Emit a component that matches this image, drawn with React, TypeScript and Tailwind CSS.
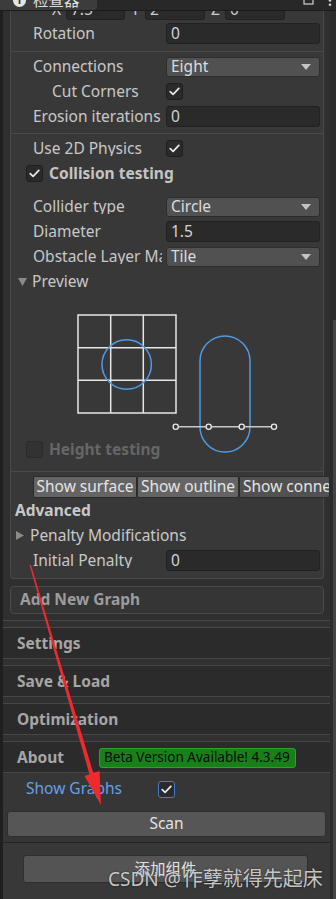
import React from "react";

const Check = ({ color = "#e8e8e8" }: { color?: string }) => (
  <svg width="11" height="9" viewBox="0 0 11 9" fill="none">
    <path d="M1.2 4.6 L4.1 7.4 L9.8 1.4" stroke={color} strokeWidth="1.7" strokeLinecap="round" strokeLinejoin="round" />
  </svg>
);

function Checkbox({ on = true, disabled = false, blue = false }: { on?: boolean; disabled?: boolean; blue?: boolean }) {
  return (
    <div
      className={`w-[17px] h-[17px] shrink-0 rounded-[3px] border flex items-center justify-center ${
        disabled
          ? "bg-[#323232] border-[#2b2b2b]"
          : blue
          ? "bg-[#2a2a2a] border-[#3f7fd0]"
          : "bg-[#2a2a2a] border-[#1f1f1f]"
      }`}
    >
      {on && <Check />}
    </div>
  );
}

function Field({ value }: { value: string }) {
  return (
    <div className="flex-1 min-w-0 h-[21px] rounded-[3px] border border-[#212121] bg-[#2a2a2a] pl-[4px] flex items-center text-[#d4d4d4]">
      {value}
    </div>
  );
}

function Dropdown({ value }: { value: string }) {
  return (
    <div className="flex-1 min-w-0 h-[20px] rounded-[3px] border border-[#2d2d2d] bg-[#515151] pl-[4px] pr-[8px] flex items-center justify-between text-[#dcdcdc]">
      <span>{value}</span>
      <svg width="10" height="6" viewBox="0 0 10 6">
        <path d="M0 0 H10 L5 6 Z" fill="#c4c4c4" />
      </svg>
    </div>
  );
}

function Row({ label, indent = false, children }: { label: string; indent?: boolean; children: React.ReactNode }) {
  return (
    <div className="h-[25px] flex items-center pl-[22px] pr-[3px]">
      <div className={`w-[129px] mr-[4px] shrink-0 whitespace-nowrap overflow-hidden ${indent ? "pl-[19px]" : ""}`}>{label}</div>
      {children}
    </div>
  );
}

function Section({ title, children }: { title: string; children?: React.ReactNode }) {
  return (
    <div>
      <div className="h-[7px] border-t border-[#474747] bg-[#313131]" />
      <div className="h-[31px] border-t border-[#474747] bg-[#2b2b2b] flex items-center pl-[14px] pt-[2px]">
        <span className="min-w-[82px] shrink-0 whitespace-nowrap font-bold text-[#a6a6a6]">{title}</span>
        {children}
      </div>
    </div>
  );
}

function Preview() {
  return (
    <div className="relative h-[143px]">
      <svg className="absolute left-0 top-0" width="313" height="165" viewBox="0 0 313 165" fill="none">
        <g stroke="#e6e6e6" strokeWidth="1.5">
          <rect x="67" y="21" width="98" height="98" />
          <line x1="99.7" y1="21" x2="99.7" y2="119" />
          <line x1="132.3" y1="21" x2="132.3" y2="119" />
          <line x1="67" y1="53.7" x2="165" y2="53.7" />
          <line x1="67" y1="86.3" x2="165" y2="86.3" />
        </g>
        <circle cx="115.7" cy="70.5" r="24.7" stroke="#4e9be6" strokeWidth="1.5" />
        <rect x="189" y="42" width="50" height="116" rx="25" stroke="#4e9be6" strokeWidth="1.5" />
        <line x1="164.7" y1="132.7" x2="263" y2="132.7" stroke="#c8c8c8" strokeWidth="1.5" />
        {[164.7, 197.7, 230.7, 263].map((cx) => (
          <circle key={cx} cx={cx} cy="132.7" r="2.6" fill="#383838" stroke="#ececec" strokeWidth="1.3" />
        ))}
      </svg>
    </div>
  );
}

export default function App() {
  return (
    <div className="relative w-[336px] h-[899px] overflow-hidden bg-[#2f2f2f] font-['Noto_Sans','Noto_Sans_CJK_SC',sans-serif] text-[15.5px] text-[#c8c8c8] leading-none">
      {/* window tab bar (cut at top) */}
      <div className="h-[11px] flex bg-[#282828] border-b border-[#1c1c1c] overflow-hidden">
        <div className="w-[97px] h-[10px] bg-[#3c3c3c] rounded-br-[3px] overflow-hidden">
          <div className="-mt-[12px] h-[24px] flex items-center pl-[13px] gap-[7px]">
            <div className="w-[13px] h-[13px] rounded-full bg-[#e4e4e4] flex items-center justify-center text-[10px] font-bold text-[#2a2a2a]">i</div>
            <span className="text-[#e0e0e0] font-['Noto_Sans_CJK_SC',sans-serif]">检查器</span>
          </div>
        </div>
        <div className="flex-1" />
        <svg width="12" height="10" viewBox="0 0 12 10" className="mr-[13px]">
          <rect x="1" y="-6" width="9" height="10" stroke="#d0d0d0" strokeWidth="1.2" fill="none" />
        </svg>
        <svg width="4" height="10" viewBox="0 0 4 10" className="mr-[4px]">
          <circle cx="2" cy="0.5" r="1.3" fill="#d0d0d0" />
          <circle cx="2" cy="4.8" r="1.3" fill="#d0d0d0" />
        </svg>
      </div>

      <div className="flex h-[888px]">
        <div className="w-[3px] shrink-0 bg-[#1f1f1f]" />

        <div className="flex-1 min-w-0 flex flex-col">
          {/* graph inspector box */}
          <div className="ml-[7px] mr-[6px] bg-[#383838] border border-t-0 border-[#4a4a4a] rounded-b-[4px] pb-[5px]">
            <div className="h-[9px] overflow-hidden">
              <div className="-mt-[12px] h-[21px] flex items-center text-[#d0d0d0]">
                <div className="w-[41px]" />
                <span className="w-[14px]">X</span>
                <div className="w-[59px] h-[21px] rounded-[3px] border border-[#212121] bg-[#2a2a2a] pl-[4px] flex items-center">7.5</div>
                <div className="w-[6px]" />
                <span className="w-[14px]">Y</span>
                <div className="w-[60px] h-[21px] rounded-[3px] border border-[#212121] bg-[#2a2a2a] pl-[4px] flex items-center">2</div>
                <div className="w-[6px]" />
                <span className="w-[14px]">Z</span>
                <div className="w-[60px] h-[21px] rounded-[3px] border border-[#212121] bg-[#2a2a2a] pl-[4px] flex items-center">0</div>
              </div>
            </div>
            <div className="h-[1px]" />
            <Row label="Rotation"><Field value="0" /></Row>
            <div className="h-[5px]" />
            <div className="h-[1px] bg-[#4a4a4a]" />
            <div className="h-[2px]" />
            <Row label="Connections"><Dropdown value="Eight" /></Row>
            <Row label="Cut Corners" indent><Checkbox /></Row>
            <Row label="Erosion iterations"><Field value="0" /></Row>
            <div className="h-[4px]" />
            <div className="h-[1px] bg-[#4a4a4a]" />
            <div className="h-[2px]" />
            <Row label="Use 2D Physics"><Checkbox /></Row>
            <div className="h-[25px] flex items-center pl-[15px] gap-[6px]">
              <Checkbox />
              <span className="font-bold text-[#c4c4c4]">Collision testing</span>
            </div>
            <div className="h-[8px]" />
            <Row label="Collider type"><Dropdown value="Circle" /></Row>
            <Row label="Diameter"><Field value="1.5" /></Row>
            <Row label="Obstacle Layer Mask"><Dropdown value="Tile" /></Row>
            <div className="h-[25px] flex items-center pl-[7px] gap-[5px]">
              <svg width="9" height="8" viewBox="0 0 9 8"><path d="M0 0 H9 L4.5 8 Z" fill="#8a8a8a" /></svg>
              <span>Preview</span>
            </div>
            <Preview />
            <div className="h-[25px] flex items-center pl-[15px] gap-[6px]">
              <Checkbox on={false} disabled />
              <span className="font-bold text-[#666666]">Height testing</span>
            </div>
            <div className="h-[9px]" />
            <div className="h-[1px] bg-[#4a4a4a]" />
            <div className="h-[4px]" />
            <div className="h-[22px] flex pl-[22px] text-[#e4e4e4]">
              <div className="w-[104px] shrink-0 rounded-[2px] border border-[#2a2a2a] bg-[#646464] flex items-center justify-center whitespace-nowrap">Show surface</div>
              <div className="w-[102px] shrink-0 rounded-[2px] border border-[#2a2a2a] bg-[#646464] flex items-center justify-center whitespace-nowrap">Show outline</div>
              <div className="w-[91px] shrink-0 rounded-[2px] border border-[#2a2a2a] bg-[#515151] pl-[3px] flex items-center overflow-hidden whitespace-nowrap">Show connections</div>
            </div>
            <div className="h-[1px]" />
            <div className="h-[24px] flex items-center pl-[4px] font-bold text-[#c8c8c8]">Advanced</div>
            <div className="h-[25px] flex items-center pl-[5px] gap-[6px]">
              <svg width="8" height="9" viewBox="0 0 8 9"><path d="M0 0 V9 L8 4.5 Z" fill="#8a8a8a" /></svg>
              <span>Penalty Modifications</span>
            </div>
            <Row label="Initial Penalty"><Field value="0" /></Row>
          </div>

          {/* add new graph */}
          <div className="mt-[7px] ml-[7px] mr-[6px] h-[28px] rounded-[4px] border border-[#4c4c4c] bg-[#353535] flex items-center pl-[9px] font-bold text-[#9c9c9c]">
            Add New Graph
          </div>

          <div className="h-[6px]" />
          <Section title="Settings" />
          <Section title="Save & Load" />
          <Section title="Optimization" />
          <Section title="About">
            <div className="h-[20px] w-[197px] px-[4px] rounded-[3px] border border-[#2fa02f] bg-[#178017] flex items-center text-[13.5px] text-[#0c0c0c] whitespace-nowrap">
              Beta Version Available! 4.3.49
            </div>
          </Section>

          {/* scan area */}
          <div className="border-t border-[#474747] bg-[#363636] pb-[5px]">
            <div className="h-[4px]" />
            <div className="h-[24px] flex items-center pl-[23px]">
              <span className="w-[132px] text-[#64a0e6]">Show Graphs</span>
              <Checkbox blue />
            </div>
            <div className="mt-[10px] mx-[4px] h-[26px] rounded-[3px] border border-[#2e2e2e] bg-[#565656] flex items-center justify-center text-[#e2e2e2]">
              Scan
            </div>
          </div>
          <div className="flex-1 border-t border-[#232323] bg-[#383838]">
            <div className="mt-[12px] ml-[20px] mr-[22px] h-[28px] rounded-[3px] border border-[#2e2e2e] bg-[#545454] flex items-center justify-center text-[#e2e2e2] font-['Noto_Sans_CJK_SC',sans-serif]">
              添加组件
            </div>
          </div>
        </div>

        <div className="w-[6px] shrink-0 flex flex-col bg-[#2c2c2c]">
          <div className="h-[309px]" />
          <div className="flex-1 ml-[3px] bg-[#454545]" />
        </div>
      </div>

      {/* annotation overlay: red arrow */}
      <svg className="absolute left-0 top-0 pointer-events-none" width="336" height="899" viewBox="0 0 336 899">
        <path d="M29.5 565 L31 565 L96 782 L92 783 Z" fill="#ee2a2f" />
        <path d="M101 805 L99.5 771 L84.5 776 Z" fill="#ee2a2f" />
      </svg>

      {/* watermark */}
      <div className="absolute left-[108px] top-[864px] flex items-baseline leading-[28px] text-[#dcdcdc]/90 [text-shadow:0_0_2px_rgba(0,0,0,0.6)] whitespace-nowrap pointer-events-none">
        <span className="text-[19px] font-['Noto_Sans',sans-serif]">CSDN @</span>
        <span className="text-[20px] ml-[2px] font-['Noto_Sans_CJK_SC',sans-serif]">作孽就得先起床</span>
      </div>
    </div>
  );
}
